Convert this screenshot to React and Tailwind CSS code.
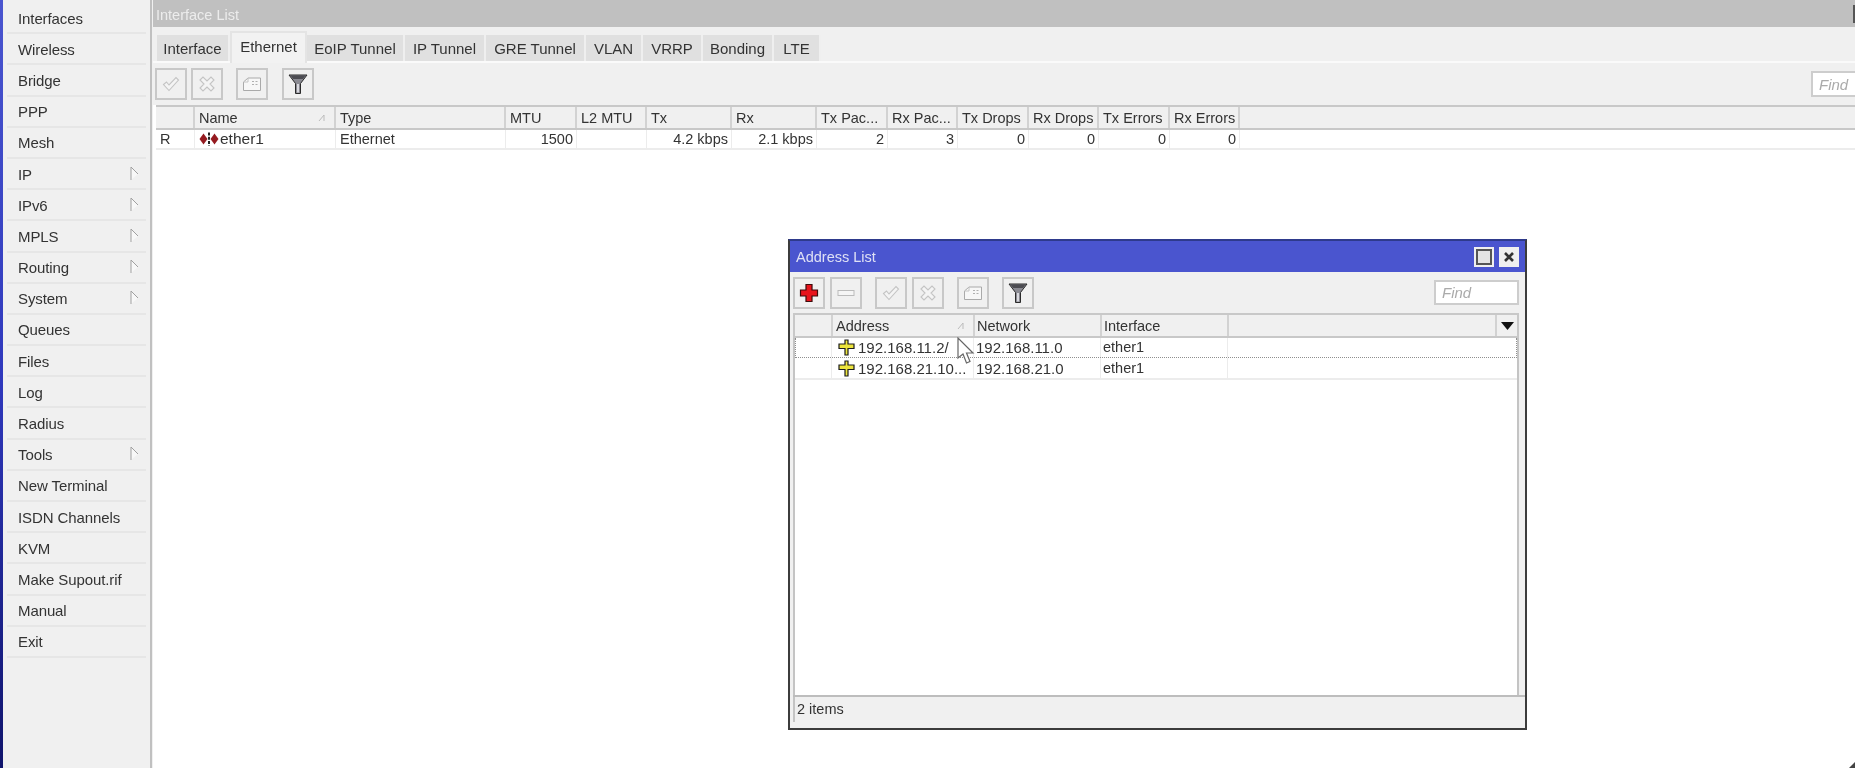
const FONT = "font-['Liberation_Sans',Arial,sans-serif]";

const menu = [
  ["Interfaces"], ["Wireless"], ["Bridge"], ["PPP"], ["Mesh"], ["IP", true], ["IPv6", true], ["MPLS", true],
  ["Routing", true], ["System", true], ["Queues"], ["Files"], ["Log"], ["Radius"], ["Tools", true],
  ["New Terminal"], ["ISDN Channels"], ["KVM"], ["Make Supout.rif"], ["Manual"], ["Exit"],
];

const CheckIcon = () => (
  <svg width="20" height="20" viewBox="0 0 20 20" fill="none">
    <path d="M2.5 10.5 L5.5 8 L8 11 L15 3.5 L17.5 6 L8 16.5 Z" stroke="#c4c4c4" strokeWidth="1.1" fill="#f4f4f4" />
  </svg>
);
const CrossIcon = () => (
  <svg width="20" height="20" viewBox="0 0 20 20" fill="none">
    <path d="M3 6 L6 3 L10 7 L14 3 L17 6 L13 10 L17 14 L14 17 L10 13 L6 17 L3 14 L7 10 Z" stroke="#c4c4c4" strokeWidth="1.1" fill="#f4f4f4" />
  </svg>
);
const NoteIcon = () => (
  <svg width="20" height="18" viewBox="0 0 20 18" fill="none">
    <path d="M1.5 7 L6 3 H18.5 V15.5 H1.5 Z" stroke="#aaa" strokeWidth="1" fill="#f7f7f7" />
    <path d="M1.5 7 H6 V3" stroke="#c4c4c4" strokeWidth="1" />
    <path d="M10 6.5h2M13.5 6.5h2M10 9.5h2M13.5 9.5h2" stroke="#b0b0b0" strokeWidth="1" />
  </svg>
);
const FilterIcon = () => (
  <svg width="20" height="22" viewBox="0 0 20 22" fill="none">
    <path d="M1 2 H19 L12.5 10.5 V20.5 H7.5 V10.5 Z" fill="#8a8a92" stroke="#2a2a2a" strokeWidth="1" />
    <path d="M2.5 2.5 H17.5 L15 6 H5 Z" fill="#4c4c52" />
    <path d="M9 11 H11 V19.5 H9 Z" fill="#d8d8de" />
  </svg>
);
const PlusIcon = () => (
  <svg width="20" height="20" viewBox="0 0 20 20">
    <path d="M7 1.5 H13 V7 H18.5 V13 H13 V18.5 H7 V13 H1.5 V7 H7 Z" fill="#e8141c" stroke="#3f0b0b" strokeWidth="1.2" />
  </svg>
);
const MinusIcon = () => (
  <svg width="20" height="20" viewBox="0 0 20 20">
    <rect x="2" y="7.5" width="16" height="5" fill="#f5f5f5" stroke="#bbb" strokeWidth="1" />
  </svg>
);
const EtherIcon = () => (
  <svg width="21" height="14" viewBox="0 0 21 14" className="shrink-0">
    <path d="M0.5 7 L4.5 1.5 L8.5 7 L4.5 12.5 Z" fill="#951a20" />
    <path d="M19.5 7 L15.5 1.5 L11.5 7 L15.5 12.5 Z" fill="#951a20" />
    <path d="M10 0.5 V13.5" stroke="#222" strokeWidth="2" strokeDasharray="3 1.2" />
  </svg>
);
const AddrIcon = () => (
  <svg width="17" height="17" viewBox="0 0 17 17" className="shrink-0">
    <path d="M7 1 H10 V5 H16 V9.5 H10 V16 H7 V9.5 H1 V5 H7 Z" fill="#ecE43c" stroke="#1c1c1c" strokeWidth="1.2" />
  </svg>
);
const SortMark = () => (
  <svg width="8" height="8" viewBox="0 0 8 8" className="shrink-0">
    <path d="M1 7 L6 1 V7" fill="none" stroke="#bcbcbc" strokeWidth="1" />
  </svg>
);

const ToolBtn = ({ className = "", children }) => (
  <div className={`flex h-[32px] w-[32px] shrink-0 items-center justify-center border-2 border-[#c8c8c8] bg-[#f0f0f0] ${className}`}>
    {children}
  </div>
);

function Sidebar() {
  return (
    <nav className="flex h-full w-[147px] shrink-0 flex-col bg-[#f0f0f0] pl-[4px] pr-[4px] pt-[3px]">
      {menu.map(([label, sub]) => (
        <div key={label} className="flex h-[31.2px] shrink-0 items-center justify-between border-b-2 border-[#e6e6e6] pl-[11px] pr-[7px] pt-[1px]">
          <span className="text-[15px] leading-none tracking-[-0.1px] text-[#333]">{label}</span>
          {sub && (
            <svg width="9" height="15" viewBox="0 0 9 15" className="-mt-[2px]">
              <path d="M1 1 L8 8 L1 14 Z" fill="#f8f8f8" />
              <path d="M1 14 V1 L8 8" fill="none" stroke="#a0a0a0" strokeWidth="1" />
            </svg>
          )}
        </div>
      ))}
    </nav>
  );
}

const tabs = [
  ["Interface", "w-[73px]"], ["Ethernet", "w-[77px]"], ["EoIP Tunnel", "w-[98px]"], ["IP Tunnel", "w-[81px]"],
  ["GRE Tunnel", "w-[100px]"], ["VLAN", "w-[57px]"], ["VRRP", "w-[60px]"], ["Bonding", "w-[71px]"], ["LTE", "w-[47px]"],
];

const ifCols = [
  { w: "w-[39px]", h: "", v: "R" },
  { w: "w-[141px]", h: "Name", v: "ether1", sort: true, icon: true },
  { w: "w-[170px]", h: "Type", v: "Ethernet" },
  { w: "w-[71px]", h: "MTU", v: "1500", r: true },
  { w: "w-[70px]", h: "L2 MTU", v: "" },
  { w: "w-[85px]", h: "Tx", v: "4.2 kbps", r: true },
  { w: "w-[85px]", h: "Rx", v: "2.1 kbps", r: true },
  { w: "w-[71px]", h: "Tx Pac...", v: "2", r: true },
  { w: "w-[70px]", h: "Rx Pac...", v: "3", r: true },
  { w: "w-[71px]", h: "Tx Drops", v: "0", r: true },
  { w: "w-[70px]", h: "Rx Drops", v: "0", r: true },
  { w: "w-[71px]", h: "Tx Errors", v: "0", r: true },
  { w: "w-[70px]", h: "Rx Errors", v: "0", r: true },
];

function InterfaceTable() {
  return (
    <div className="flex flex-col">
      <div className="flex h-[25px] border-y-2 border-[#c8c8c8] bg-[#f0f0f0]">
        {ifCols.map((c, i) => (
          <div key={i} className={`${c.w} flex shrink-0 items-center justify-between border-r-2 border-[#d2d2d2] pl-[4px] pr-[8px] pt-[1px] text-[14.5px] leading-none text-[#333]`}>
            <span className="whitespace-nowrap">{c.h}</span>
            {c.sort && <SortMark />}
          </div>
        ))}
      </div>
      <div className="flex h-[20px] border-b-2 border-[#ececec] bg-white">
        {ifCols.map((c, i) => (
          <div key={i} className={`${c.w} flex shrink-0 items-center border-r border-[#ececec] pl-[4px] pr-[3px] text-[14.5px] leading-none text-[#333] ${c.r ? "justify-end" : ""}`}>
            {c.icon && <EtherIcon />}
            <span className={`whitespace-nowrap ${c.icon ? "text-[15.5px]" : ""}`}>{c.v}</span>
          </div>
        ))}
      </div>
    </div>
  );
}

function InterfaceList() {
  return (
    <section className="flex h-full min-w-0 flex-1 flex-col">
      <header className="relative flex h-[27px] shrink-0 items-center bg-[#c0c0c0] pl-[3px] pt-[3px] text-[14.5px] leading-none text-[#ececec]">
        Interface List
        <div className="absolute right-0 top-[5px] h-[18px] w-[2px] bg-[#555]" />
      </header>
      <div className="flex h-[36px] shrink-0 items-end border-b-2 border-[#fafafa] bg-[#f0f0f0] pl-[4px]">
        {tabs.map(([t, w]) =>
          t === "Ethernet" ? (
            <div key={t} className={`${w} -mb-[2px] flex h-[32px] shrink-0 items-center justify-center border-x-2 border-t-2 border-[#e4e4e4] bg-[#f2f2f2] pb-[4px] text-[15px] leading-none text-[#333]`}>{t}</div>
          ) : (
            <div key={t} className={`${w} flex h-[26px] shrink-0 items-center justify-center border-r-2 border-[#efefef] bg-[#e0e0e0] text-[15px] leading-none text-[#333]`}>{t}</div>
          )
        )}
      </div>
      <div className="flex h-[42px] shrink-0 items-center bg-[#f0f0f0] pl-[2px]">
        <ToolBtn><CheckIcon /></ToolBtn>
        <ToolBtn className="ml-[4px]"><CrossIcon /></ToolBtn>
        <ToolBtn className="ml-[13px]"><NoteIcon /></ToolBtn>
        <ToolBtn className="ml-[14px]"><FilterIcon /></ToolBtn>
        <div className="ml-auto flex h-[26px] w-[44px] items-center overflow-hidden border-2 border-r-0 border-[#cdcdcd] bg-white pl-[6px] text-[15px] italic leading-none text-[#aaa]">Find</div>
      </div>
      <div className="flex-1 bg-white pl-[3px]">
        <InterfaceTable />
      </div>
    </section>
  );
}

const addrCols = [
  { w: "w-[38px]", h: "" },
  { w: "w-[142px]", h: "Address", sort: true, pl: "pl-[3px]" },
  { w: "w-[127px]", h: "Network", pl: "pl-[2px]" },
  { w: "w-[127px]", h: "Interface", pl: "pl-[2px]" },
  { w: "w-[268px]", h: "" },
];
const addrRows = [
  ["192.168.11.2/", "192.168.11.0", "ether1"],
  ["192.168.21.10...", "192.168.21.0", "ether1"],
];

function AddressRow({ row, focused }) {
  return (
    <div className={`flex bg-white ${focused ? "h-[20px] border-x border-b border-dotted border-[#8f8f8f]" : "h-[22px] border-b-2 border-[#ececec]"}`}>
      <div className={`${focused ? "w-[36px]" : "w-[37px]"} shrink-0 border-r border-[#ececec]`} />
      <div className="flex w-[142px] shrink-0 items-center border-r border-[#ececec] pl-[6px] text-[15px] leading-none text-[#333]">
        <AddrIcon />
        <span className="ml-[3px] whitespace-nowrap">{row[0]}</span>
      </div>
      <div className="flex w-[127px] shrink-0 items-center border-r border-[#ececec] pl-[2px] text-[15px] leading-none text-[#333]">{row[1]}</div>
      <div className="flex w-[127px] shrink-0 items-center border-r border-[#ececec] pl-[2px] text-[14.5px] leading-none text-[#333]">{row[2]}</div>
    </div>
  );
}

function AddressWindow() {
  return (
    <div className="absolute left-[788px] top-[239px] flex h-[491px] w-[739px] flex-col border-2 border-[#3c3c3c] border-t-[#2e3a8c] bg-[#f0f0f0]">
      <header className="flex h-[31px] shrink-0 items-center justify-between bg-[#4a55cf] pl-[6px] pr-[6px]">
        <span className="pt-[2px] text-[14.5px] leading-none text-[#dfe1f5]">Address List</span>
        <div className="flex items-center gap-[5px]">
          <div className="flex h-[20px] w-[20px] items-center justify-center bg-[#efefef]">
            <div className="h-[16px] w-[16px] border-2 border-[#555] bg-[#e4e4e4]" />
          </div>
          <div className="flex h-[20px] w-[20px] items-center justify-center bg-[#efefef]">
            <svg width="12" height="12" viewBox="0 0 12 12"><path d="M2 2 L10 10 M10 2 L2 10" stroke="#333" strokeWidth="2.6" /></svg>
          </div>
        </div>
      </header>
      <div className="flex h-[41px] shrink-0 items-center pl-[3px] pr-[6px]">
        <ToolBtn><PlusIcon /></ToolBtn>
        <ToolBtn className="ml-[5px]"><MinusIcon /></ToolBtn>
        <ToolBtn className="ml-[13px]"><CheckIcon /></ToolBtn>
        <ToolBtn className="ml-[5px]"><CrossIcon /></ToolBtn>
        <ToolBtn className="ml-[13px]"><NoteIcon /></ToolBtn>
        <ToolBtn className="ml-[13px]"><FilterIcon /></ToolBtn>
        <div className="ml-auto flex h-[25px] w-[85px] items-center border-2 border-[#cdcdcd] bg-white pl-[6px] text-[15px] italic leading-none text-[#aaa]">Find</div>
      </div>
      <div className="ml-[3px] mr-[6px] flex min-h-0 flex-1 flex-col border-x-2 border-[#c4c4c4] bg-white">
        <div className="-mx-[2px] flex h-[25px] shrink-0 border-2 border-[#c8c8c8] bg-[#f0f0f0]">
          {addrCols.map((c, i) => (
            <div key={i} className={`${c.w} flex shrink-0 items-center justify-between border-r-2 border-[#d2d2d2] ${c.pl || "pl-[3px]"} pr-[8px] pt-[1px] text-[14.5px] leading-none text-[#333]`}>
              <span>{c.h}</span>
              {c.sort && <SortMark />}
            </div>
          ))}
          <div className="flex flex-1 items-center justify-center">
            <svg width="13" height="8" viewBox="0 0 13 8"><path d="M0 0 H13 L6.5 8 Z" fill="#111" /></svg>
          </div>
        </div>
        {addrRows.map((r, i) => <AddressRow key={i} row={r} focused={i === 0} />)}
      </div>
      <footer className="ml-[3px] flex h-[33px] shrink-0 items-start border-t-2 border-[#bdbdbd]">
        <div className="flex h-[25px] items-center border-l-2 border-[#c4c4c4] pl-[2px] text-[14.5px] leading-none text-[#333]">2 items</div>
      </footer>
      <svg width="18" height="28" viewBox="0 0 18 28" className="absolute left-[167px] top-[96px]">
        <path d="M1 1 L1 21 L6 17 L9.5 26 L13 24.5 L9.5 16 L16 16 Z" fill="#fff" stroke="#666" strokeWidth="1.2" />
      </svg>
    </div>
  );
}

export default function App() {
  return (
    <div className={`relative flex h-[768px] w-[1855px] overflow-hidden bg-white blur-[0.35px] ${FONT}`}>
      <div className="h-full w-[3px] shrink-0 bg-gradient-to-b from-[#4a55cf] via-[#2f38bc] to-[#10146c]" />
      <Sidebar />
      <div className="h-full w-[2px] shrink-0 bg-[#c0c0c0]" />
      <div className="h-full w-[1px] shrink-0 bg-[#f0f0f0]" />
      <InterfaceList />
      <AddressWindow />
      <svg width="6" height="6" viewBox="0 0 6 6" className="absolute bottom-0 right-0">
        <path d="M6 0 V6 H0 Z" fill="#444" />
      </svg>
    </div>
  );
}
